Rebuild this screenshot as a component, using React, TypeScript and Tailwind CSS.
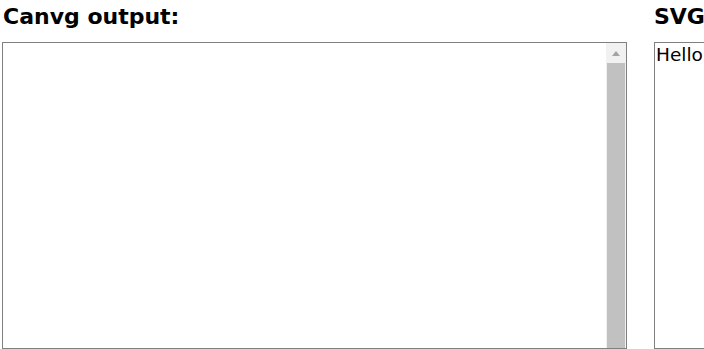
export default function App() {
  return (
    <div className="flex h-[349px] overflow-hidden bg-white font-['DejaVu_Sans',sans-serif] text-black">
      {/* Canvg column */}
      <div className="ml-[2px] flex w-[625px] shrink-0 flex-col">
        <h2 className="mt-[4px] ml-[1px] text-[22px] font-bold leading-[25px]">Canvg output:</h2>
        <div className="mt-[13px] flex h-[400px] border border-[#808080]">
          <div className="flex-1" />
          <div className="flex w-[20px] flex-col bg-[#f1f1f1] pl-[1px] pr-[1px]">
            <div className="flex h-[20px] items-center justify-center">
              <div className="h-0 w-0 border-x-[4px] border-b-[5px] border-x-transparent border-b-[#a3a3a3]" />
            </div>
            <div className="flex-1 bg-[#c1c1c1]" />
          </div>
        </div>
      </div>

      {/* SVG column */}
      <div className="ml-[27px] flex w-[300px] shrink-0 flex-col">
        <h2 className="mt-[4px] ml-[0px] text-[22px] font-bold leading-[25px]">SVG</h2>
        <div className="mt-[13px] h-[400px] border border-[#808080] pl-[1px] pt-[2px] text-[18.5px] leading-[20px]">
          Hello
        </div>
      </div>
    </div>
  );
}
